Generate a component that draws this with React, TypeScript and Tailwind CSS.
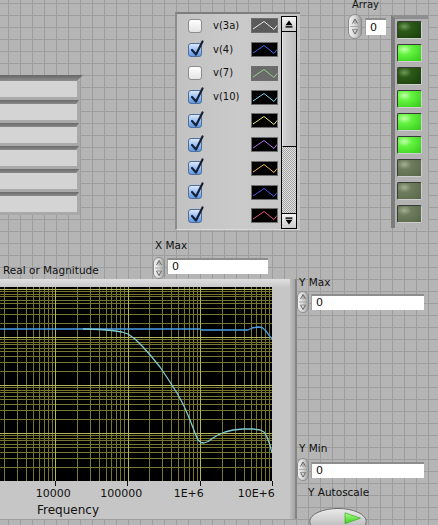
import React from "react";

function Spinner({ w, h }: { w: number; h: number }) {
  const mid = h / 2;
  return (
    <svg width={w} height={h} viewBox={`0 0 ${w} ${h}`} className="block shrink-0">
      <defs>
        <linearGradient id="spg" x1="0" y1="0" x2="1" y2="0">
          <stop offset="0" stopColor="#f4f4f4" />
          <stop offset="0.5" stopColor="#d6d6d6" />
          <stop offset="1" stopColor="#9a9a9a" />
        </linearGradient>
      </defs>
      <rect x="0.5" y="0.5" width={w - 1} height={h - 1} rx={(w - 1) / 2} fill="url(#spg)" stroke="#8a8a8a" />
      <line x1="2" y1={mid} x2={w - 2} y2={mid} stroke="#a0a0a0" strokeWidth="0.8" />
      <path d={`M${w / 2 - 2.5} ${mid - 3} L${w / 2} ${mid - 7.5} L${w / 2 + 2.5} ${mid - 3}`} fill="none" stroke="#5a5a5a" strokeWidth="0.9" />
      <line x1={w / 2} y1={mid - 7} x2={w / 2} y2={mid - 2.5} stroke="#7a7a7a" strokeWidth="0.7" />
      <path d={`M${w / 2 - 2.5} ${mid + 3} L${w / 2} ${mid + 7.5} L${w / 2 + 2.5} ${mid + 3}`} fill="none" stroke="#5a5a5a" strokeWidth="0.9" />
      <line x1={w / 2 - 2.5} y1={mid + 3} x2={w / 2 + 2.5} y2={mid + 3} stroke="#7a7a7a" strokeWidth="0.7" />
    </svg>
  );
}

function Check({ on }: { on: boolean }) {
  return (
    <div className="relative w-[14px] h-[14px] shrink-0">
      <div
        className={
          on
            ? "w-[14px] h-[14px] rounded-[3px] border border-[#4f6f9c] bg-gradient-to-b from-[#dbe8fb] via-[#9cc0f0] to-[#5f95e0]"
            : "w-[14px] h-[14px] rounded-[3px] border border-[#8c8c8c] bg-gradient-to-b from-[#ffffff] to-[#e4e4e4]"
        }
      />
      {on && (
        <svg className="absolute left-0 top-[-3px]" width="17" height="17" viewBox="0 0 17 17">
          <path d="M4 10 L8 14.5 L14.5 1.5" fill="none" stroke="#14203a" strokeWidth="2.2" strokeLinecap="round" strokeLinejoin="round" />
        </svg>
      )}
    </div>
  );
}

function Swatch({ bg, color }: { bg: string; color: string }) {
  return (
    <svg width="27" height="15" viewBox="0 0 27 15" className="block shrink-0">
      <rect x="0" y="0" width="27" height="15" fill={bg} />
      <rect x="0.5" y="0.5" width="26" height="14" fill="none" stroke="#6e6e6e" />
      <polyline points="2,11 13,3.5 23,11.5 26,7.5" fill="none" stroke={color} strokeWidth="1" />
    </svg>
  );
}

const rows = [
  { on: false, label: "v(3a)", bg: "#5a5a5a", color: "#e6e6e6" },
  { on: true, label: "v(4)", bg: "#000000", color: "#3f6fe6" },
  { on: false, label: "v(7)", bg: "#6a6a6a", color: "#98d090" },
  { on: true, label: "v(10)", bg: "#000000", color: "#80d4f4" },
  { on: true, label: "", bg: "#000000", color: "#eaea80" },
  { on: true, label: "", bg: "#000000", color: "#b070e6" },
  { on: true, label: "", bg: "#000000", color: "#f2b850" },
  { on: true, label: "", bg: "#000000", color: "#5252e6" },
  { on: true, label: "", bg: "#000000", color: "#e6508a" },
];

function ListBox() {
  return (
    <div className="mt-[12px] ml-[92px] w-[125px] h-[218px] flex border-t-2 border-l-2 border-t-[#7e7e7e] border-l-[#8c8c8c] border-b border-b-[#dadada] bg-gradient-to-r from-[#c2c2c2] via-[#cacaca] to-[#c4c4c4]">
      <div className="w-[104px] flex flex-col">
        {rows.map((r, i) => (
          <div key={i} className="h-[23.75px] flex items-center">
            <div className="ml-[11px]">
              <Check on={r.on} />
            </div>
            <div className="ml-[11px] w-[38px] text-[10px] leading-[12px] text-[#111]">{r.label}</div>
            <Swatch bg={r.bg} color={r.color} />
          </div>
        ))}
      </div>
      <div className="mt-[2px] w-[16px] h-[213px] border border-black flex flex-col">
        <div className="h-[15px] border-b border-black bg-gradient-to-b from-[#f4f4f4] to-[#cdcdcd] flex items-center justify-center">
          <svg width="8" height="8" viewBox="0 0 8 8" className="block">
            <polygon points="4,0.5 7.5,5.2 0.5,5.2" fill="#000" />
            <rect x="0.5" y="6.2" width="7" height="1.4" fill="#000" />
          </svg>
        </div>
        <div className="h-[115px] border-b border-black border-l border-l-[#e6e6e6] bg-gradient-to-r from-[#d2d2d2] to-[#bdbdbd]" />
        <div className="flex-1 bg-[#d8d8d8] bg-[image:repeating-conic-gradient(#a2a2a2_0_25%,#e4e4e4_0_50%)] bg-[size:2px_2px]" />
        <div className="h-[15px] border-t border-black bg-gradient-to-b from-[#f4f4f4] to-[#cdcdcd] flex items-center justify-center">
          <svg width="8" height="8" viewBox="0 0 8 8" className="block">
            <rect x="0.5" y="0.4" width="7" height="1.4" fill="#000" />
            <polygon points="0.5,2.8 7.5,2.8 4,7.5" fill="#000" />
          </svg>
        </div>
      </div>
    </div>
  );
}

function LeftBars() {
  return (
    <div className="mt-[75px] w-[83px] flex flex-col">
      <div className="h-[6px] w-[83px] bg-gradient-to-b from-[#666666] to-[#8e8e8e] [clip-path:polygon(0_0,100%_0,calc(100%-6px)_100%,0_100%)]" />
      {[0, 1, 2, 3, 4, 5].map((i) => (
        <div key={i} className="w-[80px] bg-[#a9a9a9] flex flex-col">
          <div className="w-[77px] h-[16px] bg-[#d4d4d4]" />
          <div className="h-[3px]" />
          {i < 5 && (
            <div className="w-[79px] h-[4px] bg-gradient-to-b from-[#6a6a6a] to-[#8a8a8a] [clip-path:polygon(0_0,100%_0,calc(100%-3px)_100%,0_100%)]" />
          )}
        </div>
      ))}
    </div>
  );
}

const ledStyles: Record<string, string> = {
  dark: "w-[25px] h-[18px] rounded-[2px] border border-t-[#3a3a3a] border-l-[#3a3a3a] border-r-[#cfcfcf] border-b-[#cfcfcf] bg-[radial-gradient(ellipse_at_28%_28%,#6f9a58_0%,#2c5a18_30%,#183d0b_100%)]",
  on: "w-[25px] h-[18px] rounded-[2px] border border-t-[#3a3a3a] border-l-[#3a3a3a] border-r-[#cfcfcf] border-b-[#cfcfcf] bg-[radial-gradient(ellipse_at_28%_28%,#c4ffae_0%,#66f442_30%,#33c818_100%)]",
  off: "w-[25px] h-[18px] rounded-[2px] border border-t-[#3a3a3a] border-l-[#3a3a3a] border-r-[#cfcfcf] border-b-[#cfcfcf] bg-[radial-gradient(ellipse_at_28%_28%,#a3b193_0%,#6e7d5c_30%,#57664a_100%)]",
};

function ArrayCtl() {
  const leds = ["dark", "on", "dark", "on", "on", "on", "off", "off", "off"];
  return (
    <div className="ml-[48px] flex flex-col">
      <div className="-mt-[2px] pl-[4px] text-[10px] leading-[13px]">Array</div>
      <div className="mt-[3px] flex items-start">
        <div className="flex items-center">
          <Spinner w={14} h={25} />
          <div className="ml-[3px] w-[21px] h-[17px] bg-white border-t-2 border-t-[#8d8d8d] border-l border-l-[#a0a0a0] pl-[4px] text-[11px] leading-[15px]">0</div>
        </div>
        <div className="ml-[5px] mt-[1px] w-[37px] h-[213px] flex flex-col gap-[5px] border-l-4 border-l-[#7c7c7c] border-t-4 border-t-[#8e8e8e] bg-[#b3b3b3] pl-[2px] pt-[2px]">
          {leds.map((s, i) => (
            <div key={i} className={ledStyles[s]} />
          ))}
        </div>
      </div>
    </div>
  );
}

function Plot() {
  const W = 272;
  const H = 194;
  const D = 72.5;
  const vMaj: number[] = [];
  const vMin: number[] = [];
  for (let d = -2; d <= 3; d++) {
    const x0 = 55 + d * D;
    if (x0 >= 0 && x0 <= W + 1) vMaj.push(x0);
    for (let k = 2; k <= 9; k++) {
      const x = x0 + D * Math.log10(k);
      if (x >= 0 && x <= W) vMin.push(x);
    }
  }
  const DH = 48;
  const hMaj: number[] = [];
  const hMin: number[] = [];
  for (let d = -1; d <= 4; d++) {
    const t = 2 + d * DH;
    if (t >= 0 && t <= H) hMaj.push(t);
    const b = t + DH;
    for (let k = 2; k <= 9; k++) {
      const y = b - DH * Math.log10(k);
      if (y >= 0 && y <= H) hMin.push(y);
    }
  }
  const c1 = "0,42 200,42 202,43 248,43 252,41 258,40 262,40.5 266,44 272,52";
  const c2 =
    "83,42 100,42.5 112,43.5 122,45 128,47 135,52 143,60 151,69 160,80 168,92 177,106 184,119 190,133 195,146 198,153 201,155.5 204,156 208,154.5 213,151 218,148 225,145 233,143 243,142 253,142 260,143 264,145 267,150 270,158 272,166";
  return (
    <svg width={W} height={H} viewBox={`0 0 ${W} ${H}`} className="block shrink-0 bg-black">
      <g shapeRendering="crispEdges" strokeWidth="1">
        {vMin.map((x, i) => (
          <line key={"vm" + i} x1={Math.round(x) + 0.5} y1={0} x2={Math.round(x) + 0.5} y2={H} stroke="#76762f" />
        ))}
        {hMin.map((y, i) => (
          <line key={"hm" + i} x1={0} y1={Math.round(y) + 0.5} x2={W} y2={Math.round(y) + 0.5} stroke="#76762f" />
        ))}
        {vMaj.map((x, i) => (
          <line key={"vM" + i} x1={Math.round(x) + 0.5} y1={0} x2={Math.round(x) + 0.5} y2={H} stroke="#b4b45a" />
        ))}
        {hMaj.map((y, i) => (
          <line key={"hM" + i} x1={0} y1={Math.round(y) + 0.5} x2={W} y2={Math.round(y) + 0.5} stroke="#b4b45a" />
        ))}
      </g>
      <polyline points={c1} fill="none" stroke="#4b9fe8" strokeWidth="1.3" strokeLinejoin="round" />
      <polyline points={c2} fill="none" stroke="#80cad6" strokeWidth="1.3" strokeLinejoin="round" />
    </svg>
  );
}

function Graph() {
  return (
    <div className="w-[297px] h-[240px] flex">
      <div className="w-[290px] h-[240px] flex flex-col bg-[#c6c6c6]">
        <div className="h-[8px] bg-gradient-to-b from-[#e0e0e0] to-[#c9c9c9]" />
        <div className="flex">
          <Plot />
        </div>
        <div className="h-[38px] flex flex-col">
          <svg width="290" height="6" viewBox="0 0 290 6" className="block">
            {[55, 127, 200, 272].map((x) => (
              <line key={x} x1={x + 0.5} y1={0} x2={x + 0.5} y2={5} stroke="#111" shapeRendering="crispEdges" />
            ))}
          </svg>
          <div className="flex text-[11px] leading-[14px] text-[#111] whitespace-nowrap">
            <div className="ml-[19px] w-[73px] text-center">10000</div>
            <div className="w-[72px] text-center">100000</div>
            <div className="w-[72px] text-center">1E+6</div>
            <div className="w-[72px] text-center">10E+6</div>
          </div>
          <div className="ml-[37px] mt-[2px] text-[12px] leading-[15px] text-[#111]">Frequency</div>
        </div>
      </div>
      <div className="w-[5px] h-[240px] bg-gradient-to-r from-[#bdbdbd] to-[#a4a4a4]" />
      <div className="w-[2px] h-[240px] bg-[#858585]" />
    </div>
  );
}

function Field({ w }: { w: string }) {
  return (
    <div className={w}>
      <div className="h-[16px] bg-white border-t-2 border-t-[#8d8d8d] border-l border-l-[#a0a0a0] pl-[4px] text-[11px] leading-[14px] text-[#111]">0</div>
    </div>
  );
}

function RightControls() {
  return (
    <div className="flex flex-col">
      <div className="mt-[38px] pl-[2px] text-[10.5px] leading-[13px]">Y Max</div>
      <div className="mt-[2px] flex items-center">
        <Spinner w={12} h={22} />
        <div className="ml-[2px]">
          <Field w="w-[113px]" />
        </div>
      </div>
      <div className="mt-[129px] pl-[2px] text-[10.5px] leading-[13px]">Y Min</div>
      <div className="mt-[3px] flex items-center">
        <Spinner w={12} h={23} />
        <div className="ml-[2px]">
          <Field w="w-[113px]" />
        </div>
      </div>
      <div className="mt-[5px] pl-[11px] text-[10.5px] leading-[13px]">Y Autoscale</div>
      <div className="mt-[9px] ml-[12px]">
        <svg width="59" height="28" viewBox="0 0 59 28" className="block">
          <defs>
            <linearGradient id="btng" x1="0" y1="0" x2="0" y2="1">
              <stop offset="0" stopColor="#ececec" />
              <stop offset="0.6" stopColor="#c4c4c4" />
              <stop offset="1" stopColor="#9a9a9a" />
            </linearGradient>
            <linearGradient id="grng" x1="0" y1="0" x2="0" y2="1">
              <stop offset="0" stopColor="#a8ff88" />
              <stop offset="1" stopColor="#3ccf1c" />
            </linearGradient>
          </defs>
          <ellipse cx="29" cy="13.5" rx="28.3" ry="13" fill="url(#btng)" stroke="#6e6e6e" />
          <polygon points="36,4.8 51.5,10.2 36,15.6" fill="url(#grng)" stroke="#2e9a16" strokeWidth="0.6" />
        </svg>
      </div>
    </div>
  );
}

export default function App() {
  return (
    <div className="w-[438px] h-[525px] overflow-hidden bg-[#b5b5b5] bg-[image:linear-gradient(to_right,#9d9d9d_1px,transparent_1px),linear-gradient(to_bottom,#9d9d9d_1px,transparent_1px)] bg-[size:12px_12px] bg-[position:8px_3px] font-['DejaVu_Sans',sans-serif] text-[#111]">
      <div className="flex items-start h-[238px]">
        <LeftBars />
        <ListBox />
        <ArrayCtl />
      </div>
      <div className="flex items-start">
        <div className="w-[297px] flex flex-col">
          <div className="h-[41px] flex">
            <div className="w-[150px] self-end pb-[2px] pl-[3px] text-[10.5px] leading-[13px] whitespace-nowrap">Real or Magnitude</div>
            <div className="ml-[3px] flex flex-col">
              <div className="mt-[1px] pl-[2px] text-[10.5px] leading-[13px]">X Max</div>
              <div className="mt-[5px] flex items-start">
                <Spinner w={12} h={22} />
                <div className="ml-[2px] mt-[1px]">
                  <Field w="w-[101px]" />
                </div>
              </div>
            </div>
          </div>
          <Graph />
        </div>
        <RightControls />
      </div>
    </div>
  );
}
